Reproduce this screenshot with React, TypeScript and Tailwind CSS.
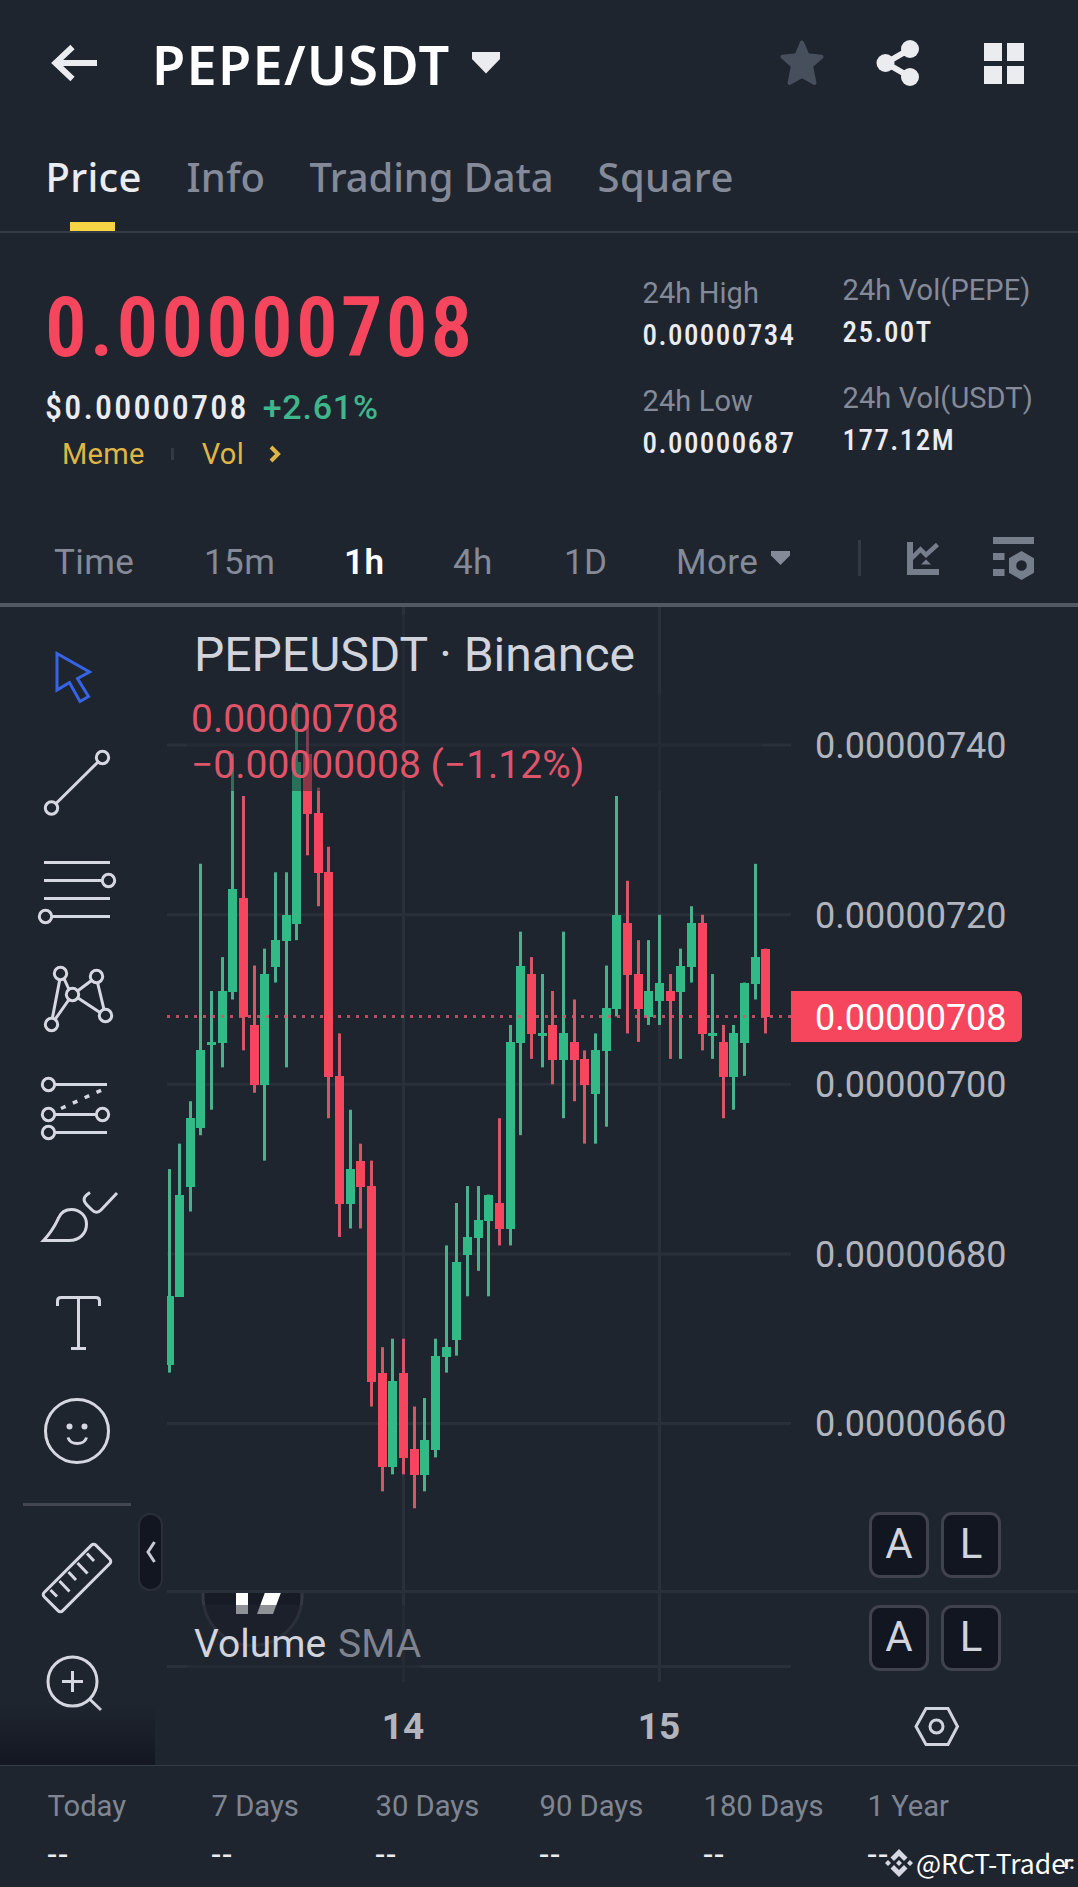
import type { ReactNode } from 'react'

type Candle = [high: number, top: number, bottom: number, low: number, up: 0 | 1]

// 1h candles, prices in units of 1e-8 USDT
const CANDLES: Candle[] = [
  [690, 675, 667, 666, 1],
  [693, 687, 675, 675, 1],
  [698, 696, 688, 685, 1],
  [726, 704, 695, 694, 1],
  [711, 705, 705, 697, 1],
  [715, 711, 705, 702, 1],
  [739, 723, 711, 710, 1],
  [734, 722, 708, 704, 0],
  [714, 707, 700, 699, 0],
  [716, 713, 700, 691, 1],
  [725, 717, 714, 712, 1],
  [725, 720, 717, 702, 1],
  [745, 738, 719, 717, 1],
  [743, 739, 732, 727, 0],
  [735, 732, 725, 721, 0],
  [728, 725, 701, 696, 0],
  [706, 701, 686, 682, 0],
  [697, 690, 686, 683, 1],
  [693, 691, 688, 683, 0],
  [691, 688, 665, 662, 0],
  [669, 666, 655, 652, 0],
  [670, 665, 655, 654, 1],
  [670, 666, 656, 654, 0],
  [662, 657, 654, 650, 0],
  [663, 658, 654, 652, 1],
  [670, 668, 657, 656, 1],
  [681, 669, 668, 666, 1],
  [686, 679, 670, 668, 1],
  [688, 682, 680, 675, 1],
  [688, 684, 682, 678, 1],
  [687, 687, 684, 675, 1],
  [696, 686, 683, 681, 0],
  [707, 705, 683, 681, 1],
  [718, 714, 705, 694, 1],
  [715, 713, 706, 703, 0],
  [713, 706, 706, 702, 1],
  [711, 707, 703, 700, 0],
  [718, 706, 703, 696, 1],
  [710, 705, 703, 698, 0],
  [704, 703, 700, 693, 0],
  [706, 704, 699, 693, 1],
  [714, 709, 704, 695, 1],
  [734, 720, 709, 708, 1],
  [724, 719, 713, 706, 0],
  [717, 713, 709, 705, 0],
  [717, 711, 708, 707, 1],
  [720, 712, 710, 707, 1],
  [713, 711, 710, 703, 0],
  [716, 714, 711, 703, 1],
  [721, 719, 714, 712, 1],
  [720, 719, 706, 704, 0],
  [713, 706, 706, 703, 1],
  [707, 705, 701, 696, 0],
  [707, 706, 701, 697, 1],
  [712, 712, 705, 701, 1],
  [726, 715, 712, 710, 1],
  [716, 716, 708, 706, 0],
]

const AXIS = [740, 720, 700, 680, 660]

const TABS = [
  { label: 'Price', cls: 'w-[141px] tracking-[0.300px] text-[#eaecef]', active: true },
  { label: 'Info', cls: 'w-[123px] tracking-[0.200px] text-[#848a98]' },
  { label: 'Trading Data', cls: 'w-[288px] tracking-[-0.150px] text-[#848a98]' },
  { label: 'Square', cls: 'tracking-[0.400px] text-[#848a98]' },
]

const INTERVALS = [
  { label: 'Time', cls: 'w-[150px]' },
  { label: '15m', cls: 'w-[140px]' },
  { label: '1h', cls: 'w-[109px] font-semibold text-white' },
  { label: '4h', cls: 'w-[111px]' },
  { label: '1D', cls: 'w-[112px]' },
]

const PERIODS = ['Today', '7 Days', '30 Days', '90 Days', '180 Days', '1 Year']

const priceY = (p: number) => 477.3 - (p - 700) * 8.48
const candleX = (i: number) => Math.floor(14 + i * 10.66) + 0.5

function Header() {
  return (
    <header className="flex h-[126px] items-center pl-[51px]">
      <svg width="46" height="38" viewBox="0 0 46 38" fill="none" stroke="#eaecef" strokeWidth="6">
        <path d="M4 19h42M21.500 3L4.500 19L21.500 35" />
      </svg>
      <h1 className="ml-[55px] pt-px font-['Noto_Sans',sans-serif] text-[54px] leading-none font-semibold tracking-[1.300px] text-white">
        PEPE/USDT
      </h1>
      <svg className="ml-[21px]" width="28" height="22" viewBox="0 0 28 22" fill="#eaecef">
        <path d="M0 0h28v7L14 21.500L0 7z" />
      </svg>
      <div className="ml-auto flex items-center pr-[54px]">
        <svg width="46" height="48" viewBox="0 0 46 48">
          <path
            d="M23 3.500L28.500 16.200L42.500 17.700L32 27L35.500 44L23 37L10.500 44L14 27L3.500 17.700L17.500 16.200z"
            fill="#474f5c" stroke="#474f5c" strokeWidth="4" strokeLinejoin="round"
          />
        </svg>
        <svg className="ml-[51px]" width="44" height="48" viewBox="0 0 44 48" fill="#eaecef">
          <path d="M34 10L10 24L34 38" fill="none" stroke="#eaecef" strokeWidth="6" />
          <circle cx="34" cy="10" r="9" />
          <circle cx="9.500" cy="24" r="9" />
          <circle cx="34" cy="38" r="9" />
        </svg>
        <div className="ml-[64px] grid grid-cols-2 gap-[5px]">
          {[0, 1, 2, 3].map((i) => (
            <span key={i} className="h-[18px] w-[17.500px] bg-[#eaecef]" />
          ))}
        </div>
      </div>
    </header>
  )
}

function Tabs() {
  return (
    <nav className="flex h-[107px] border-b-2 border-[#343a44] pt-[31px] pl-[45.500px] font-['Noto_Sans',sans-serif] text-[40px] leading-[40px] font-medium">
      {TABS.map((t) => (
        <div key={t.label} className={`flex flex-col justify-between ${t.cls}`}>
          <span className="whitespace-nowrap">{t.label}</span>
          {t.active && <span className="ml-6 h-[9px] w-[45px] bg-[#f7d443]" />}
        </div>
      ))}
    </nav>
  )
}

function Stat({ label, value }: { label: string; value: string }) {
  return (
    <div className="whitespace-nowrap">
      <div className="text-[29px] leading-9 tracking-[0.100px] text-[#848a98]">{label}</div>
      <div className="mt-1.5 text-[29px] leading-9 font-medium tracking-[1.450px] text-[#eaecef] [font-stretch:75%]">{value}</div>
    </div>
  )
}

function Summary() {
  return (
    <section className="flex h-[288px]">
      <div className="w-[642.500px] pt-[53px] pl-[45px]">
        <div className="text-[83px] leading-[84px] font-semibold tracking-[3.100px] text-[#f6465d] [font-stretch:75%]">0.00000708</div>
        <div className="mt-[17px] flex text-[34px] leading-10 font-medium">
          <span className="tracking-[2.200px] text-[#eaecef] [font-stretch:75%]">$0.00000708</span>
          <span className="ml-[14px] tracking-[0.800px] text-[#3fb68b]">+2.61%</span>
        </div>
        <div className="mt-[9px] ml-[17px] flex items-center text-[29px] leading-9 tracking-[0.300px] text-[#dfb545]">
          <span>Meme</span>
          <span className="ml-[26px] h-3 w-[3px] bg-[#343a44]" />
          <span className="ml-[28px]">Vol</span>
          <svg className="ml-[25px]" width="12" height="18" viewBox="0 0 12 18" fill="none" stroke="#dfb545" strokeWidth="4">
            <path d="M2 2L9 9L2 16" />
          </svg>
        </div>
      </div>
      <div className="flex w-[200px] flex-col gap-[30px] pt-[42px]">
        <Stat label="24h High" value="0.00000734" />
        <Stat label="24h Low" value="0.00000687" />
      </div>
      <div className="flex flex-col gap-[30px] pt-[39px]">
        <Stat label="24h Vol(PEPE)" value="25.00T" />
        <Stat label="24h Vol(USDT)" value="177.12M" />
      </div>
    </section>
  )
}

function IntervalBar() {
  return (
    <div className="flex h-[86px] items-center border-b-4 border-[#535862] pl-[54px] text-[35px] tracking-[0.400px] text-[#848a98]">
      {INTERVALS.map((i) => (
        <span key={i.label} className={`pt-[3px] ${i.cls}`}>{i.label}</span>
      ))}
      <span className="pt-[3px]">More</span>
      <svg className="mb-2 ml-[13px]" width="19" height="14" viewBox="0 0 19 14" fill="#848a98">
        <path d="M0 0h19v4.500L9.500 14L0 4.500z" />
      </svg>
      <span className="mb-2 ml-[68px] h-9 w-[3px] bg-[#343a44]" />
      <svg className="mb-2 ml-[46px]" width="33" height="33" viewBox="0 0 33 33" fill="#767d8b">
        <path d="M0 0h6v27h26v6H0z" />
        <path d="M3 18L13.500 7.500L19 13L30.500 2.500" fill="none" stroke="#767d8b" strokeWidth="4.500" />
        <path d="M14 22.500L19 17.500L24 22.500z" />
      </svg>
      <svg className="mb-1.5 ml-[53px]" width="42" height="44" viewBox="0 0 42 44" fill="#767d8b">
        <path d="M0 0h41v7H0zM0 16h11.500v7H0zM0 32h11.500v7H0z" />
        <path d="M28.500 14L41 21.200V35.800L28.500 43L16 35.800V21.200zM28.500 23.200a5.300 5.300 0 1 0 0 10.600a5.300 5.300 0 1 0 0-10.600z" fillRule="evenodd" />
      </svg>
    </div>
  )
}

function Tool({ children, color = '#d5d8e0' }: { children: ReactNode; color?: string }) {
  return (
    <svg className="block" width="155" height="108" viewBox="0 0 155 108" fill="none" stroke={color} strokeWidth="3">
      {children}
    </svg>
  )
}

function DrawingTools() {
  return (
    <aside className="relative w-[155px] pt-[15px]">
      {/* cursor */}
      <Tool color="#3564e6">
        <path d="M57 31.500V68L69.500 60.500L80 79.500L88.500 74.500L77.500 56.500L89.500 50z" />
      </Tool>
      {/* trend line */}
      <Tool>
        <circle cx="102.500" cy="27.500" r="6.200" />
        <circle cx="51.500" cy="78" r="6.200" />
        <path d="M56 73.500L98 32" />
      </Tool>
      {/* fib retracement */}
      <Tool>
        <path d="M44 24.500H110M44 42.500H102M44 60.500H110M52 78.500H110" />
        <circle cx="108.500" cy="42.500" r="6.200" />
        <circle cx="45.500" cy="78.500" r="6.200" />
      </Tool>
      {/* pattern */}
      <Tool>
        <path d="M59.800 33.500L52.300 72.500M64 32.500L69 43.500M55 73.500L69 53.500M77.500 45L91.500 34.500M97.500 36.500L104 63.500M78 52L100 66.500" />
        <circle cx="60.500" cy="27.500" r="6.200" />
        <circle cx="96.500" cy="30.500" r="6.200" />
        <circle cx="72.500" cy="48.500" r="6.200" />
        <circle cx="105.500" cy="69.500" r="6.200" />
        <circle cx="51.500" cy="78.500" r="6.200" />
      </Tool>
      {/* forecast */}
      <Tool>
        <path d="M54.500 30.500H107M54.500 60.500H96M54.500 78.500H107" />
        <path d="M61 54.500L104 35" strokeDasharray="5 8" strokeWidth="3.500" />
        <circle cx="48.500" cy="30.500" r="6.200" />
        <circle cx="48.500" cy="60.500" r="6.200" />
        <circle cx="102.500" cy="60.500" r="6.200" />
        <circle cx="48.500" cy="78.500" r="6.200" />
      </Tool>
      {/* brush */}
      <Tool>
        <path d="M43.500 78.500C54 67 56.500 60 58.500 56C61 50 66 47.500 71.500 47.500C80 47.500 86.500 54 86.500 62C86.500 71 80 78.500 69 78.500z" />
        <path d="M90 30.500C83 35 82.500 38 87 43L92 48C95 51 98 51 101 48L117 31" />
      </Tool>
      {/* text */}
      <Tool>
        <path d="M57.500 36V31Q57.500 27.500 61 27.500H96Q99.500 27.500 99.500 31V36M78.500 27.500V78.500M71 78.500H86" />
      </Tool>
      {/* emoji */}
      <Tool>
        <circle cx="77" cy="53" r="31.500" />
        <path d="M68 59.500C70 67.500 84.500 67.500 86.500 59.500" />
        <circle cx="69.500" cy="48.500" r="3" fill="#d5d8e0" stroke="none" />
        <circle cx="84.500" cy="48.500" r="3" fill="#d5d8e0" stroke="none" />
      </Tool>
      <div className="my-[17px] ml-[23px] h-[3px] w-[108px] bg-[#434751]" />
      {/* ruler */}
      <Tool>
        <rect x="40.500" y="42" width="73" height="26" rx="3" transform="rotate(-45 77 55)" />
        <path d="M50.500 67L57 73.500M59.500 58L69.500 68.500M68.500 49L76 57M77.500 40L87.500 50.500M87 30.500L94 38" />
      </Tool>
      {/* zoom in */}
      <Tool>
        <circle cx="72.500" cy="50.500" r="24.500" />
        <path d="M62 50.500H83M72.500 40V61M89.500 68L101 79" />
      </Tool>
      <div className="absolute bottom-0 left-0 h-[61px] w-full bg-gradient-to-b from-transparent to-[#131722]" />
    </aside>
  )
}

function ScaleButtons({ className }: { className: string }) {
  return (
    <div className={`absolute left-[714px] flex gap-3 ${className}`}>
      {['A', 'L'].map((l) => (
        <button
          key={l}
          className="flex h-[66px] w-[60px] items-center justify-center rounded-[11px] border-3 border-[#40434d] bg-[#121621] pb-0.5 text-[42px] leading-none text-[#d1d4dc]"
        >
          {l}
        </button>
      ))}
    </div>
  )
}

function Chart() {
  return (
    <div className="relative flex-1">
      <svg className="block" width="923" height="1158" viewBox="0 0 923 1158">
        <g stroke="#2a303a" strokeWidth="3">
          {AXIS.map((p) => (
            <path key={p} d={`M12 ${priceY(p)}H636`} />
          ))}
          <path d="M12 1059.500H636M12 984.500H923M248.500 0V1075M504.500 0V1075" />
        </g>

        {CANDLES.map(([high, top, bottom, low, up], i) => {
          const x = candleX(i)
          const yTop = Math.round(priceY(top))
          const bodyX = i === 0 ? x - 2.5 : x - 4.5
          return (
            <g key={i}>
              <path d={`M${x} ${priceY(high)}V${priceY(low)}`} stroke={up ? '#4bb18a' : '#d4566a'} strokeWidth="3" />
              <rect
                x={bodyX}
                y={yTop}
                width={i === 0 ? 7 : 9}
                height={Math.max(3, Math.round(priceY(bottom)) - yTop + 1)}
                fill={up ? '#32ba86' : '#f6465d'}
              />
            </g>
          )
        })}
        <path d="M12 409.500H636" stroke="#d9566a" strokeOpacity="0.850" strokeWidth="3" strokeDasharray="3 6" />

        {/* chart vendor badge, cut off by the pane edge */}
        <clipPath id="pane">
          <rect x="0" y="986" width="923" height="100" />
        </clipPath>
        <g clipPath="url(#pane)">
          <circle cx="97.500" cy="989" r="49.500" fill="#171b26" stroke="#343843" strokeWidth="3" />
          <path d="M81 980H93V1007H81zM112 980H128L118 1007H102z" fill="#fff" />
        </g>

        <g fill="#b2b5be" fontSize="36">
          {AXIS.map((p) => (
            <text key={p} x="660" y={priceY(p) + 12.8}>{`0.00000${p}`}</text>
          ))}
        </g>
        <path d="M636 384H861a6 6 0 0 1 6 6V429a6 6 0 0 1-6 6H636z" fill="#f6465d" />
        <text x="660" y="422.500" fontSize="36" fill="#fff">0.00000708</text>

        <g fill="#b2b5be" fontSize="37" fontWeight="700" textAnchor="middle">
          <text x="248" y="1131.500">14</text>
          <text x="504" y="1131.500">15</text>
        </g>
        <g fill="none" stroke="#d1d4dc" strokeWidth="3">
          <path d="M771 1101.500H793L802.500 1119.500L793 1137.500H771L761 1119.500z" />
          <circle cx="781.500" cy="1119.500" r="6.500" />
        </g>
      </svg>

      <div className="absolute top-2 left-8 h-[79px] w-[458px] bg-[#1f252f]/50 pl-[7px] text-[48px] leading-[79px] whitespace-nowrap text-[#d1d4dc]">
        PEPEUSDT · Binance
      </div>
      <div className="absolute top-[87px] left-8 h-[97px] w-[576px] bg-[#1f252f]/50 pt-0.5 pl-1 text-[39px] leading-[46px] whitespace-nowrap text-[#de5468]">
        <div>0.00000708</div>
        <div>−0.00000008 (−1.12%)</div>
      </div>
      <div className="absolute top-[998px] left-8 flex h-[77px] gap-3 bg-[#1f252f]/50 pl-[7px] text-[39px] leading-[79px]">
        <span className="text-[#d1d4dc]">Volume</span>
        <span className="text-[#7f838e]">SMA</span>
      </div>

      <ScaleButtons className="top-[905px]" />
      <ScaleButtons className="top-[998px]" />

      <button className="absolute top-[906px] -left-[17px] flex h-[78px] w-[25px] items-center justify-center rounded-xl border-2 border-[#2a2e39] bg-[#121621]">
        <svg width="10" height="22" viewBox="0 0 10 22" fill="none" stroke="#c6c9d1" strokeWidth="3">
          <path d="M8.500 1L2 11L8.500 21" />
        </svg>
      </button>
    </div>
  )
}

function PeriodChanges() {
  return (
    <footer className="relative h-[122px] border-t border-[#363b46] pt-[22px] pl-[47.500px]">
      <div className="flex">
        {PERIODS.map((p) => (
          <div key={p} className="w-[164px] shrink-0 whitespace-nowrap">
            <div className="text-[29.200px] leading-9 text-[#7f8592]">{p}</div>
            <div className="mt-[13px] text-[33px] leading-9 tracking-[2px] text-[#eaecef]">--</div>
          </div>
        ))}
      </div>
      <div className="absolute top-[83px] left-[885px] flex items-center">
        <svg width="28" height="28" viewBox="0 0 28 28" fill="#d5d8e0">
          <path d="M14 0L22.500 8.500L19 12L14 7L9 12L5.500 8.500zM14 28L5.500 19.500L9 16L14 21L19 16L22.500 19.500zM14 11L17 14L14 17L11 14zM3 11L6 14L3 17L0 14zM25 11L28 14L25 17L22 14z" />
        </svg>
        <span className="ml-[3px] font-['Noto_Sans_CJK_SC',sans-serif] text-[26.500px] leading-7 text-white">@RCT-Trade</span>
        <span className="-ml-0.5 text-[19px] leading-7 font-bold tracking-[-1.500px] text-white">r:</span>
      </div>
    </footer>
  )
}

export default function App() {
  return (
    <div className="h-[1887px] w-[1078px] overflow-hidden bg-[#1f252f] font-['Roboto',sans-serif]">
      <Header />
      <Tabs />
      <Summary />
      <IntervalBar />
      <main className="flex h-[1158px]">
        <DrawingTools />
        <Chart />
      </main>
      <PeriodChanges />
    </div>
  )
}
